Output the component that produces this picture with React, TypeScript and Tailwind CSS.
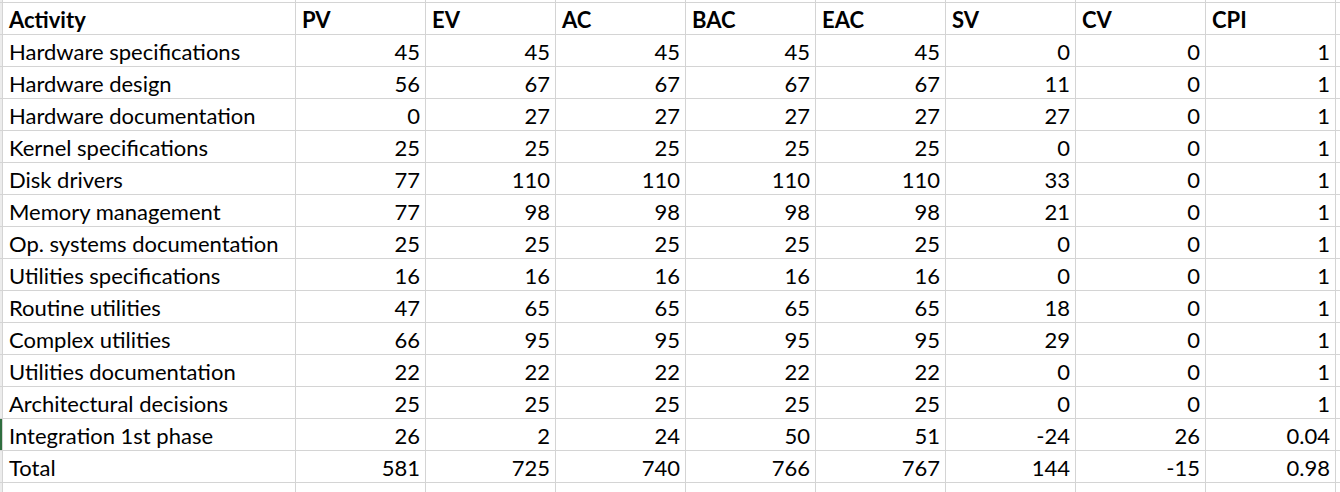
import React from "react";

const headers = ["Activity", "PV", "EV", "AC", "BAC", "EAC", "SV", "CV", "CPI"];

const rows: (string | number)[][] = [
  ["Hardware specifications", 45, 45, 45, 45, 45, 0, 0, 1],
  ["Hardware design", 56, 67, 67, 67, 67, 11, 0, 1],
  ["Hardware documentation", 0, 27, 27, 27, 27, 27, 0, 1],
  ["Kernel specifications", 25, 25, 25, 25, 25, 0, 0, 1],
  ["Disk drivers", 77, 110, 110, 110, 110, 33, 0, 1],
  ["Memory management", 77, 98, 98, 98, 98, 21, 0, 1],
  ["Op. systems documentation", 25, 25, 25, 25, 25, 0, 0, 1],
  ["Utilities specifications", 16, 16, 16, 16, 16, 0, 0, 1],
  ["Routine utilities", 47, 65, 65, 65, 65, 18, 0, 1],
  ["Complex utilities", 66, 95, 95, 95, 95, 29, 0, 1],
  ["Utilities documentation", 22, 22, 22, 22, 22, 0, 0, 1],
  ["Architectural decisions", 25, 25, 25, 25, 25, 0, 0, 1],
  ["Integration 1st phase", 26, 2, 24, 50, 51, -24, 26, "0.04"],
  ["Total", 581, 725, 740, 766, 767, 144, -15, "0.98"],
];

function Row({
  cells,
  height,
  bold,
  selected,
  blank,
}: {
  cells: (string | number)[];
  height: string;
  bold?: boolean;
  selected?: boolean;
  blank?: boolean;
}) {
  return (
    <div className={`flex ${height} border-b border-[#d4d4d4]`}>
      <div className={`w-[2px] shrink-0 ${selected ? "bg-[#2f6e3f]" : "bg-[#ececec]"}`} />
      {cells.map((c, i) => (
        <div
          key={i}
          className={`shrink-0 flex items-end pb-[3px] border-r border-[#d4d4d4] ${
            i === 0 ? "w-[294px] border-l pl-[6px]" : "w-[130px] pr-[5px]"
          } ${i > 0 && !bold ? "justify-end" : "pl-[6px]"} ${bold ? "font-bold" : ""}`}
        >
          {!blank && <span className="leading-none">{c}</span>}
        </div>
      ))}
      <div className="flex-1" />
    </div>
  );
}

export default function App() {
  const empty = Array(9).fill("");
  return (
    <div
      className="w-[1340px] h-[492px] overflow-hidden bg-white text-black text-[22px]"
      style={{ fontFamily: "Lato, 'Open Sans', sans-serif" }}
    >
      <Row cells={empty} height="h-[3px]" blank />
      <Row cells={headers} height="h-[32px]" bold />
      {rows.map((r, i) => (
        <Row key={i} cells={r} height="h-[32px]" selected={i === 12} />
      ))}
      <Row cells={empty} height="h-[20px]" blank />
    </div>
  );
}
